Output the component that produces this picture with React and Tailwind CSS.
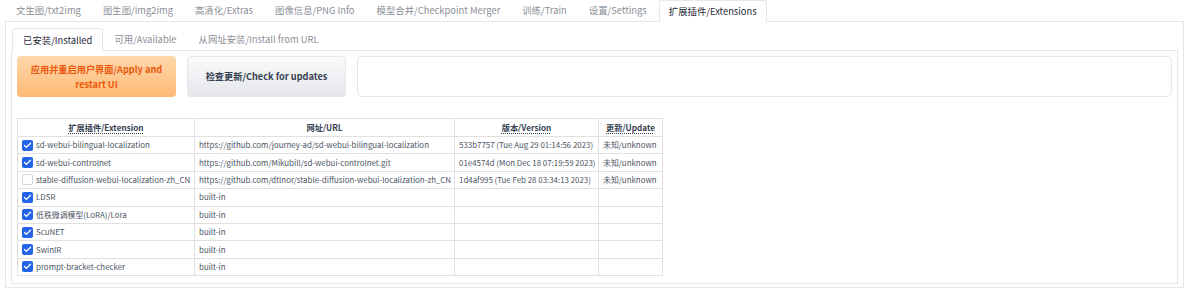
import { Check } from 'lucide-react';

const topTabs = [
  '文生图/txt2img',
  '图生图/img2img',
  '高清化/Extras',
  '图像信息/PNG Info',
  '模型合并/Checkpoint Merger',
  '训练/Train',
  '设置/Settings',
  '扩展插件/Extensions',
];

const subTabs = ['已安装/Installed', '可用/Available', '从网址安装/Install from URL'];

const rows = [
  {
    name: 'sd-webui-bilingual-localization',
    url: 'https://github.com/journey-ad/sd-webui-bilingual-localization',
    version: '533b7757 (Tue Aug 29 01:14:56 2023)',
    update: '未知/unknown',
    on: true,
  },
  {
    name: 'sd-webui-controlnet',
    url: 'https://github.com/Mikubill/sd-webui-controlnet.git',
    version: '01e4574d (Mon Dec 18 07:19:59 2023)',
    update: '未知/unknown',
    on: true,
  },
  {
    name: 'stable-diffusion-webui-localization-zh_CN',
    url: 'https://github.com/dtlnor/stable-diffusion-webui-localization-zh_CN',
    version: '1d4af995 (Tue Feb 28 03:34:13 2023)',
    update: '未知/unknown',
    on: false,
  },
  { name: 'LDSR', url: 'built-in', version: '', update: '', on: true },
  { name: '低秩微调模型(LoRA)/Lora', url: 'built-in', version: '', update: '', on: true },
  { name: 'ScuNET', url: 'built-in', version: '', update: '', on: true },
  { name: 'SwinIR', url: 'built-in', version: '', update: '', on: true },
  { name: 'prompt-bracket-checker', url: 'built-in', version: '', update: '', on: true },
];

function Checkbox({ checked }) {
  return checked ? (
    <span className="flex h-[11px] w-[11px] shrink-0 items-center justify-center rounded-[2px] bg-[#2563eb]">
      <Check size={9} strokeWidth={3.5} color="white" />
    </span>
  ) : (
    <span className="h-[11px] w-[11px] shrink-0 rounded-[2px] border border-[#d1d5db] bg-white" />
  );
}

export default function App() {
  return (
    <div
      className="h-[294px] w-[1192px] bg-white pl-[5px] pr-[8px] text-[#374151]"
      style={{ fontFamily: '"Noto Sans CJK SC", "Noto Sans", sans-serif' }}
    >
      <div className="flex h-[22px] border-b border-[#e5e7eb]">
        {topTabs.map((t, i) =>
          i === topTabs.length - 1 ? (
            <div
              key={t}
              className="-mb-px ml-[1px] flex h-[22px] items-center rounded-t-[3px] border border-b-0 border-[#e5e7eb] bg-white px-[9px] text-[9.4px] text-[#1f2937]"
            >
              {t}
            </div>
          ) : (
            <div key={t} className="flex h-[21px] items-center px-[11px] text-[9.4px] text-[#8b8f97]">
              {t}
            </div>
          )
        )}
      </div>

      <div className="h-[266px] border border-t-0 border-[#e5e7eb] px-[5px] pt-[6px]">
        <div className="flex h-[23px] border-b border-[#e5e7eb]">
          {subTabs.map((t, i) =>
            i === 0 ? (
              <div
                key={t}
                className="-mb-px ml-px flex h-[23px] items-center rounded-t-[4px] border border-b-0 border-[#e5e7eb] bg-white px-[10px] text-[9.4px] text-[#1f2937]"
              >
                {t}
              </div>
            ) : (
              <div key={t} className="flex h-[22px] items-center px-[11px] text-[9.4px] text-[#8b8f97]">
                {t}
              </div>
            )
          )}
        </div>

        <div className="h-[233px] border border-t-0 border-[#e5e7eb] px-[5px] pt-[5px]">
          <div className="flex h-[41px] gap-[11px]">
            <button className="w-[159px] rounded-[4px] bg-gradient-to-b from-[#fed7aa] to-[#fdba74] px-[10px] text-[9.2px] font-semibold leading-[15px] text-[#ea580c]">
              应用并重启用户界面/Apply and restart UI
            </button>
            <button className="w-[159px] rounded-[4px] border border-[#e5e7eb] bg-gradient-to-b from-[#f9fafb] to-[#e5e7eb] text-[9.2px] font-semibold text-[#374151]">
              检查更新/Check for updates
            </button>
            <div className="flex-1 rounded-[5px] border border-[#e5e7eb] bg-white" />
          </div>

          <table className="mt-[21px] w-[645px] table-fixed border-collapse text-[7.9px] text-[#4b5563]">
            <colgroup>
              <col className="w-[177px]" />
              <col className="w-[260px]" />
              <col className="w-[144px]" />
              <col className="w-[64px]" />
            </colgroup>
            <thead>
              <tr className="h-[18px]">
                {['扩展插件/Extension', '网址/URL', '版本/Version', '更新/Update'].map((h) => (
                  <th
                    key={h}
                    className={`border border-[#e0e0e0] px-1 text-center text-[8.2px] font-semibold text-[#374151] ${
                      h === '网址/URL' ? '' : 'underline decoration-dotted underline-offset-2'
                    }`}
                  >
                    {h}
                  </th>
                ))}
              </tr>
            </thead>
            <tbody>
              {rows.map((r) => (
                <tr key={r.name} className="h-[17.4px]">
                  <td className="overflow-hidden border border-[#e0e0e0] px-[4px]">
                    <div className="flex items-center gap-[3px] whitespace-nowrap">
                      <Checkbox checked={r.on} />
                      <span>{r.name}</span>
                    </div>
                  </td>
                  <td className="overflow-hidden whitespace-nowrap border border-[#e0e0e0] px-[4px]">{r.url}</td>
                  <td className="overflow-hidden whitespace-nowrap border border-[#e0e0e0] px-[4px]">{r.version}</td>
                  <td className="overflow-hidden whitespace-nowrap border border-[#e0e0e0] px-[4px]">{r.update}</td>
                </tr>
              ))}
            </tbody>
          </table>
        </div>
      </div>
    </div>
  );
}
